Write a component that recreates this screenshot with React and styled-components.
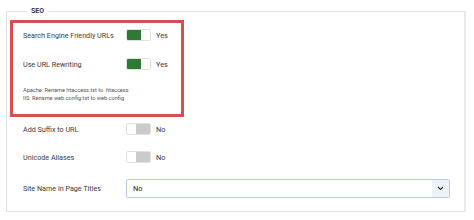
import React from "react";
import styled, { createGlobalStyle } from "styled-components";

const Global = createGlobalStyle`
  body {
    margin: 0;
    background: #fff;
    font-family: Roboto, "Liberation Sans", sans-serif;
    color: #333;
  }
`;

const Page = styled.div`
  width: 474px;
  height: 220px;
  padding-top: 7px;
  box-sizing: border-box;
`;

const Fieldset = styled.fieldset`
  margin: 0 0 0 6px;
  width: 460px;
  box-sizing: border-box;
  border: 1px solid #e2e2e2;
  border-right: 2px solid #e8e8ee;
  padding: 0 0 8px 0;
`;

const Legend = styled.legend`
  margin-left: 20px;
  padding: 0 4px;
  font-size: 7px;
  font-weight: 700;
  color: #333;
`;

const Highlight = styled.div`
  margin: 5px 0 0 3px;
  width: 174px;
  box-sizing: border-box;
  border: 3px solid #d44f4f;
  padding: 0 0 12px 10px;
`;

const Row = styled.div`
  display: flex;
  align-items: center;
  height: ${(p) => p.h || 24}px;
  margin-top: ${(p) => p.mt || 0}px;
  padding-left: ${(p) => (p.inset ? 0 : 16)}px;
`;

const Label = styled.div`
  width: 103px;
  font-size: 7.2px;
  color: #3a3a3a;
  white-space: nowrap;
`;

const Switch = styled.div`
  display: flex;
  width: 25px;
  height: 12px;
  box-sizing: border-box;
  border: 1px solid #e0e0e0;
  border-radius: 2px;
  overflow: hidden;
  flex-direction: ${(p) => (p.on ? "row" : "row-reverse")};
`;

const Knob = styled.div`
  width: 14px;
  background: ${(p) => (p.on ? "#2e7a35" : "#cbcbcb")};
`;

const State = styled.span`
  margin-left: 5px;
  font-size: 7.4px;
  color: #3a3a3a;
`;

const Notes = styled.div`
  margin-top: 10px;
  font-size: 5.6px;
  line-height: 8px;
  color: #555;
`;

const Select = styled.div`
  display: flex;
  align-items: center;
  width: 324px;
  height: 19px;
  box-sizing: border-box;
  border: 1px solid #b6cde8;
  border-radius: 2px;
  font-size: 7.4px;
  color: #222;
`;

const SelectValue = styled.span`
  flex: 1;
  padding-left: 6px;
`;

const Chevron = styled.div`
  width: 17px;
  align-self: stretch;
  display: flex;
  align-items: center;
  justify-content: center;
  background: #eef2f7;
`;

const Toggle = ({ on }) => (
  <>
    <Switch on={on ? 1 : 0}>
      <Knob on={on ? 1 : 0} />
    </Switch>
    <State>{on ? "Yes" : "No"}</State>
  </>
);

export default function App() {
  return (
    <Page>
      <Global />
      <Fieldset>
        <Legend>SEO</Legend>
        <Highlight>
          <Row inset>
            <Label>Search Engine Friendly URLs</Label>
            <Toggle on />
          </Row>
          <Row inset mt={5}>
            <Label>Use URL Rewriting</Label>
            <Toggle on />
          </Row>
          <Notes>
            Apache: Rename htaccess.txt to .htaccess
            <br />
            IIS: Rename web.config.txt to web.config
          </Notes>
        </Highlight>
        <Row>
          <Label>Add Suffix to URL</Label>
          <Toggle />
        </Row>
        <Row mt={4}>
          <Label>Unicode Aliases</Label>
          <Toggle />
        </Row>
        <Row mt={4} h={30}>
          <Label>Site Name in Page Titles</Label>
          <Select>
            <SelectValue>No</SelectValue>
            <Chevron>
              <svg width="7" height="5" viewBox="0 0 7 5">
                <path d="M1 1l2.5 2.5L6 1" fill="none" stroke="#333" strokeWidth="1.2" />
              </svg>
            </Chevron>
          </Select>
        </Row>
      </Fieldset>
    </Page>
  );
}
